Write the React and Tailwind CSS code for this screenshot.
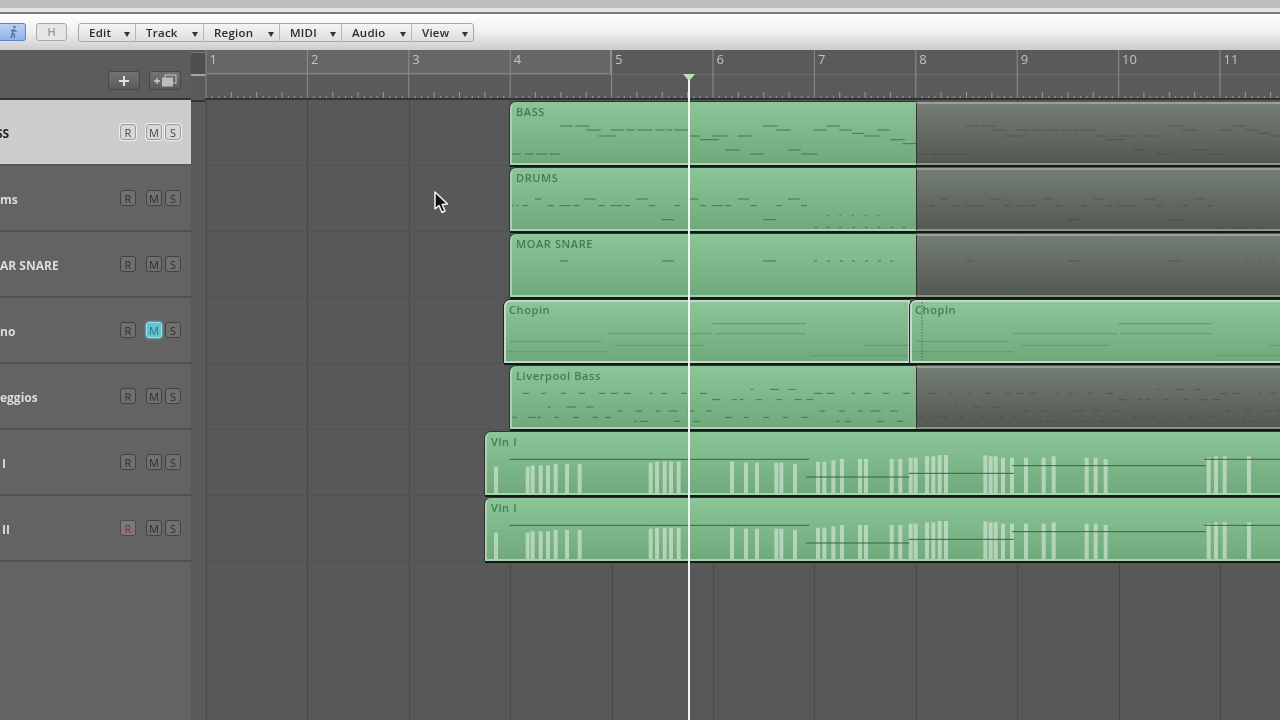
import React from "react";

const AL = 205;
const bars = Array.from({ length: 11 }, (_, i) => 206 + i * 101.4);

const conv = (groups, ox, oy) =>
  groups.flatMap(([y, ...xs]) => {
    const out = [];
    for (let i = 0; i < xs.length; i += 2) out.push([ox + xs[i] / 3, ox + xs[i + 1] / 3, oy + y / 3]);
    return out;
  });

const bass = conv([
  [228, 180, 218, 226, 270, 789, 833, 980, 1020],
  [240, 258, 302, 332, 372, 378, 405, 412, 458, 466, 494, 500, 516, 522, 570, 828, 872, 942, 980, 1018, 1055, 1132, 1168],
  [250, 1056, 1092],
  [258, 296, 348, 565, 602, 637, 683, 713, 755, 1093, 1141],
  [269, 600, 656, 1170, 1214],
  [281, 1208, 1248],
  [300, 675, 720, 864, 902],
  [312, 36, 62, 74, 100, 108, 142, 150, 180, 751, 792, 903, 952],
], 500, 50);

const drums = conv([
  [447, 105, 124, 253, 287, 409, 443, 563, 595, 713, 747, 864, 899],
  [467, 36, 42, 50, 56, 68, 85, 143, 162, 178, 212, 219, 238, 296, 314, 332, 366, 375, 390, 447, 466, 524, 540, 600, 618, 636, 670, 677, 693, 752, 770, 829, 846, 903, 921],
  [497, 980, 985, 1018, 1023, 1056, 1061, 1094, 1099, 1132, 1137],
  [509, 485, 522, 790, 827],
  [532, 943, 952, 979, 990, 1017, 1026, 1056, 1066, 1094, 1104, 1132, 1142, 1170, 1180, 1208, 1218],
], 500, 50);

const snare = [
  [560, 568, 261], [662, 674, 261], [763, 776, 261],
  [814, 817, 261], [827, 830, 261], [840, 843, 261], [852, 855, 261], [865, 868, 261], [878, 881, 261], [890, 893, 261],
];

const chopin = conv([
  [86, 697, 978],
  [116, 382, 695, 705, 978],
  [139, 90, 365],
  [151, 404, 671, 1152, 1285],
  [170, 82, 383],
  [182, 990, 1283],
], 480, 295);

const liverpool = conv([
  [283, 812, 820, 870, 897, 925, 947],
  [295, 128, 148, 185, 197, 243, 258, 298, 315, 356, 377, 392, 413, 432, 453, 508, 518, 545, 562, 603, 620, 660, 682, 1002, 1027, 1040, 1062, 1115, 1125, 1153, 1172, 1210, 1228, 1268, 1290],
  [314, 697, 720, 755, 770, 778, 790, 830, 845, 890, 905, 945, 965, 980, 1000],
  [336, 203, 213, 260, 288, 318, 340],
  [348, 412, 427, 468, 487, 527, 540, 565, 592, 622, 642, 678, 695, 1020, 1035, 1077, 1095, 1135, 1148, 1172, 1202, 1230, 1252],
  [367, 97, 110, 145, 168, 172, 183, 222, 237, 280, 297, 338, 354, 375, 392, 735, 757, 792, 806, 850, 867, 907, 923, 963, 985],
  [379, 462, 470, 480, 503, 583, 600, 640, 658, 1068, 1078, 1095, 1112, 1192, 1210, 1250, 1268],
], 480, 295);

const vlnBars = [
  ...[[48,110],[143,110],[158,106],[182,106],[204,106],[227,102],[261,102],[299,102],[512,98],[531,95],[554,95],[573,95],[596,95],[756,95],[798,98],[831,98],[889,98],[904,98],[945,102],[1014,95],[1033,95],[1060,91],[1086,87],[1140,87],[1158,87]].map(([x, t]) => [480 + x / 3, 430 + t / 3]),
  ...[[95,87],[121,87],[152,83],[167,83],[201,79],[220,79],[239,75],[258,75],[376,76],[392,79],[407,79],[429,83],[456,83],[498,83],[551,83],[581,79],[680,83],[707,83],[737,87],[1046,83],[1068,79],[1094,79],[1167,79]].map(([x, t]) => [860 + x / 3, 430 + t / 3]),
];
const vlnLines = [
  [480 + 88 / 3, 480 + 988 / 3, 430 + 88 / 3],
  [480 + 978 / 3, 860 + 148 / 3, 430 + 141 / 3],
  [860 + 146 / 3, 860 + 462 / 3, 430 + 130 / 3],
  [860 + 456 / 3, 860 + 1037 / 3, 430 + 107 / 3],
  [860 + 1033 / 3, 1280, 430 + 88 / 3],
];

const tracks = [
  { label: "SS", selected: true, shift: "-ml-[4px]" },
  { label: "ms", shift: "ml-0" },
  { label: "AR SNARE", shift: "ml-0" },
  { label: "no", mute: true, shift: "ml-0" },
  { label: "eggios", shift: "ml-0" },
  { label: "I", shift: "ml-[2px]" },
  { label: "II", shift: "ml-[2px]", rec: true },
];

function SmallBtn({ children, tone }) {
  const cls =
    tone === "mute"
      ? "bg-[#63c3d2] border-[#8fe6f2] text-[#2f7683] shadow-[0_0_3px_#7fe0ee]"
      : tone === "rec"
      ? "bg-[#7a7a7a] border-[#4d4d4d] text-[#96203c]"
      : tone === "light"
      ? "bg-[#d8d8d8] border-[#999999] text-[#444] shadow-[0_0_0_1px_#eee]"
      : "bg-[#707070] border-[#424242] text-[#2e2e2e]";
  return (
    <div className={`w-4 h-4 rounded-[3px] border flex items-center justify-center text-[11px] leading-none ${cls}`}>
      {children}
    </div>
  );
}

function TrackRow({ t }) {
  return (
    <div className={`h-[66px] flex items-center relative border-b-2 ${t.selected ? "bg-[#cdcdcd] border-[#565656]" : "bg-[#636363] border-[#505050]"}`}>
      <div className={`mt-[3px] text-[12px] font-bold whitespace-nowrap ${t.shift} ${t.selected ? "text-[#222]" : "text-[#dcdcdc]"}`}>{t.label}</div>
      <div className="ml-auto mr-[10px] flex items-center">
        <SmallBtn tone={t.rec ? "rec" : t.selected ? "light" : undefined}>R</SmallBtn>
        <div className="w-[10px]" />
        <SmallBtn tone={t.mute ? "mute" : t.selected ? "light" : undefined}>M</SmallBtn>
        <div className="w-[3px]" />
        <SmallBtn tone={t.selected ? "light" : undefined}>S</SmallBtn>
      </div>
    </div>
  );
}

function Region({ x, end, name, selected }) {
  return (
    <div
      className={`absolute top-[2px] h-[63px] rounded-tl-[6px] bg-gradient-to-b from-[#8cc598] to-[#70a97c] border-b-2 ${selected ? "border-t-2 border-x-2 border-[#c9d6cb] border-b-[#c9d6cb] shadow-[0_2px_0_#151815,-1px_0_0_#222,0_-1px_0_#222]" : "border-l-2 border-l-[#a9d2b2] border-b-[#a9d2b2] shadow-[0_2px_0_#151815,-1px_0_0_#333,0_-1px_0_#333]"}`}
      style={{ left: x - AL, width: end - x }}
    >
      <div className={`absolute text-[11px] leading-[15px] font-semibold tracking-[0.6px] text-[#447a55] whitespace-nowrap ${selected ? "left-[3px] top-0" : "left-[4px] top-[2px]"}`}>{name}</div>
    </div>
  );
}

function Ghost() {
  return (
    <div
      className="absolute top-[2px] h-[63px] border-t-2 border-t-[#97a197] border-b-2 border-b-[#8a958a] border-l border-l-[#333] bg-gradient-to-b from-[#747d73] to-[#525a51] shadow-[0_2px_0_#151815]"
      style={{ left: 916 - AL, right: 0 }}
    />
  );
}

function Notes({ top, items, color, width = 1, shift = 0, minX = 0, opacity = 1 }) {
  return (
    <svg className="absolute left-0 top-0 pointer-events-none" width="1075" height="66" viewBox="0 0 1075 66">
      {items
        .filter((n) => n[0] + shift >= minX)
        .map((n, i) => (
          <line
            key={i}
            x1={n[0] + shift - AL}
            x2={n[1] + shift - AL}
            y1={n[2] - top}
            y2={n[2] - top}
            stroke={color}
            strokeWidth={width}
            opacity={opacity}
          />
        ))}
    </svg>
  );
}

function MidiLayer({ top, items }) {
  return (
    <>
      <Notes top={top} items={items} color="#457550" />
      <Notes top={top} items={items} color="#3c433c" shift={406} minX={917} opacity={0.5} />
    </>
  );
}

function Ruler() {
  const ticks = Array.from({ length: 172 }, (_, i) => i);
  return (
    <div className="h-[50px] bg-[#5a5a5a] relative border-b-2 border-[#333]">
      <div className="absolute left-[2px] top-0 w-[405px] h-[24px] bg-[#666666] border-b border-[#858585] border-r-2 border-r-[#8f8f8f]" />
      <div className="absolute left-0 right-0 top-[24px] h-px bg-[#6c6c6c]" />
      <svg className="absolute left-0 top-0" width="1075" height="49" viewBox="0 0 1075 49">
        {ticks.map((i) => {
          const x = 1 + i * 6.3375;
          if (i % 16 === 0) return <line key={i} x1={x} x2={x} y1="0" y2="48" stroke="#8f8f8f" strokeWidth="1" />;
          const h = i % 4 === 0 ? 6 : 2;
          return <line key={i} x1={x} x2={x} y1={48 - h} y2="48" stroke="#9a9a9a" strokeWidth="1" />;
        })}
      </svg>
      {bars.map((b, i) => (
        <div key={i} className="absolute top-0 text-[13px] leading-[18px] text-[#c2c2c2]" style={{ left: b - AL + 3.5 }}>
          {i + 1}
        </div>
      ))}
    </div>
  );
}

function ChevronMenu({ label, w }) {
  return (
    <div className="h-[18px] relative border-r border-[#b5b5b5] last:border-r-0" style={{ width: w }}>
      <span className="absolute top-0 left-[10px] text-[11.5px] leading-[17px] font-semibold tracking-[0.25px] text-[#2b2b2b]">
        {label}
      </span>
      <span className="absolute right-[5px] top-[8px] w-0 h-0 border-l-[3.5px] border-r-[3.5px] border-t-[5px] border-l-transparent border-r-transparent border-t-[#333]" />
    </div>
  );
}

export default function App() {
  return (
    <div className="w-[1280px] h-[720px] overflow-hidden relative flex flex-col blur-[0.45px] font-['Open_Sans','Noto_Sans',sans-serif] bg-[#585858]">
      <div className="h-[14px] flex flex-col">
        <div className="h-[8px] bg-[#bdbdbd]" />
        <div className="h-[4px] bg-[#e4e4e4]" />
        <div className="h-[2px] bg-[#7d7d7d]" />
      </div>

      <div className="h-[36px] bg-gradient-to-b from-[#ffffff] via-[#f0f0f0] to-[#cdcdcd] flex items-start pt-[9px]">
        <div className="w-[26px] h-[18px] rounded-r-[3px] bg-gradient-to-b from-[#b9d2f2] to-[#8fb3e6] border border-l-0 border-[#5e86c4] flex items-center justify-center">
          <svg width="12" height="14" viewBox="0 0 12 14" fill="none" stroke="#4f6d94" strokeWidth="1.3">
            <circle cx="7.5" cy="2" r="1.2" fill="#4f6d94" stroke="none" />
            <path d="M7 4 L5.5 8 L7.5 10 L7 13 M5.5 8 L4 13 M7 5 L9.5 7 M7 4.5 L4 6" />
          </svg>
        </div>
        <div className="ml-[10px] w-[31px] h-[18px] rounded-[3px] border border-[#a9a9a9] bg-[#e6e6e6] flex items-center justify-center text-[11.5px] font-semibold text-[#9a9a9a]">
          H
        </div>
        <div className="ml-[11px] w-[396px] h-[19px] rounded-[3px] border border-[#a8a8a8] bg-gradient-to-b from-[#f4f4f4] to-[#dedede] flex">
          <ChevronMenu label="Edit" w={57} />
          <ChevronMenu label="Track" w={68} />
          <ChevronMenu label="Region" w={76} />
          <ChevronMenu label="MIDI" w={62} />
          <ChevronMenu label="Audio" w={70} />
          <ChevronMenu label="View" w={61} />
        </div>
      </div>

      <div className="flex flex-1 min-h-0">
        <aside className="w-[191px] flex flex-col bg-[#636363]">
          <div className="h-[50px] bg-[#5c5c5c] border-b-2 border-[#333] flex items-start justify-end pt-[21px] pr-[10px]">
            <div className="w-[32px] h-[19px] rounded-[3px] border border-[#474747] bg-gradient-to-b from-[#727272] to-[#5c5c5c] flex items-center justify-center">
              <svg width="12" height="12" viewBox="0 0 12 12" fill="none" stroke="#e2e2e2" strokeWidth="2">
                <path d="M6 1v10M1 6h10" />
              </svg>
            </div>
            <div className="ml-[9px] w-[32px] h-[19px] rounded-[3px] border border-[#474747] bg-gradient-to-b from-[#727272] to-[#5c5c5c] flex items-center justify-center">
              <svg width="24" height="13" viewBox="0 0 24 13" fill="none">
                <path d="M1 7h6M4 4v6" stroke="#d0d0d0" strokeWidth="1.3" />
                <rect x="12" y="1" width="11" height="8" stroke="#c8c8c8" strokeWidth="1" />
                <rect x="9" y="3.5" width="11" height="9" fill="#bdbdbd" />
              </svg>
            </div>
          </div>
          {tracks.map((t, i) => (
            <TrackRow key={i} t={t} />
          ))}
        </aside>

        <div className="w-[14px] bg-[#595959] relative">
          <div className="absolute left-0 top-[2px] right-0 h-[22px] bg-[#4e4e4e] border-t border-[#777]" />
          <div className="absolute left-0 top-[24px] w-[16px] h-[2px] bg-[#a6a6a6]" />
          <div className="absolute right-[-2px] top-0 w-[2px] h-[26px] bg-[#a6a6a6]" />
          <div className="absolute top-[50px] left-0 right-0 h-[2px] bg-[#333]" />
        </div>

        <div className="flex-1 relative flex flex-col">
          <Ruler />
          <div className="flex-1 relative">
            {bars.map((b, i) => (
              <div key={i} className="absolute top-0 bottom-0 w-px bg-[#484848]" style={{ left: b - AL }} />
            ))}
            <div className="relative flex flex-col">
              <div className="h-[66px] relative border-b border-[#515151]">
                <Region x={510} end={916} name="BASS" />
                <Ghost />
                <MidiLayer top={100} items={bass} />
              </div>
              <div className="h-[66px] relative border-b border-[#515151]">
                <Region x={510} end={916} name="DRUMS" />
                <Ghost />
                <MidiLayer top={166} items={drums} />
              </div>
              <div className="h-[66px] relative border-b border-[#515151]">
                <Region x={510} end={916} name="MOAR SNARE" />
                <Ghost />
                <MidiLayer top={232} items={snare} />
              </div>
              <div className="h-[66px] relative border-b border-[#515151]">
                <Region x={504} end={910} name="Chopin" selected />
                <Region x={910} end={1290} name="Chopin" selected />
                <Notes top={298} items={chopin} color="#5f9a6e" />
                <Notes top={298} items={chopin} color="#5f9a6e" shift={406} minX={911} />
                <svg className="absolute left-0 top-0" width="1075" height="66" viewBox="0 0 1075 66">
                  <line x1="717" x2="717" y1="4" y2="63" stroke="#4e6a55" strokeWidth="1" strokeDasharray="1.5 1.5" />
                </svg>
              </div>
              <div className="h-[66px] relative border-b border-[#515151]">
                <Region x={510} end={916} name="Liverpool Bass" />
                <Ghost />
                <MidiLayer top={364} items={liverpool} />
              </div>
              {[430, 496].map((top) => (
                <div key={top} className="h-[66px] relative border-b border-[#515151]">
                  <Region x={485} end={1290} name="Vln I" />
                  <svg className="absolute left-0 top-0" width="1075" height="66" viewBox="0 0 1075 66">
                    {vlnBars.map(([x, t], i) => (
                      <rect key={i} x={x - 2 - AL} y={t - 430} width="4" height={493 - t} fill="#d5e8d6" opacity="0.65" />
                    ))}
                    {vlnLines.map(([a, b, y], i) => (
                      <line key={i} x1={a - AL} x2={b - AL} y1={y - 430} y2={y - 430} stroke="#3f6045" strokeWidth="1" />
                    ))}
                  </svg>
                </div>
              ))}
            </div>
          </div>

          <div className="absolute top-[30px] bottom-0 left-[483px] w-[1.5px] bg-[#f1f5f1]" />
          <svg className="absolute left-[478px] top-[24px]" width="12" height="8" viewBox="0 0 12 8">
            <path d="M0 0H12L6 7Z" fill="#c2dfc0" />
          </svg>
        </div>
      </div>

      <svg className="absolute left-[433px] top-[191px]" width="17" height="25" viewBox="0 0 17 25">
        <path d="M2 1 L2 18 L6 14.5 L9 21.5 L12 20 L9.2 13.5 L14.5 13 Z" fill="#111" stroke="#f4f4f4" strokeWidth="1.5" strokeLinejoin="round" />
      </svg>
    </div>
  );
}
